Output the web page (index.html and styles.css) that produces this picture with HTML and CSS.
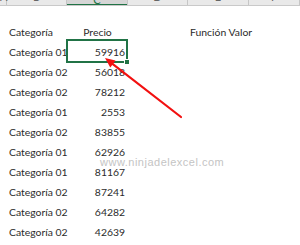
FILE: index.html
```html
<!DOCTYPE html>
<html lang="es">
<head>
<meta charset="utf-8">
<title>Función Valor</title>
<link rel="stylesheet" href="styles.css">
</head>
<body>
<div class="sheet">
  <div class="colheads">
    <div class="ch">A</div>
    <div class="ch">B</div>
    <div class="ch sel">C</div>
    <div class="ch">D</div>
    <div class="ch">E</div>
    <div class="ch">F</div>
  </div>
  <div class="grid">
    <div class="row head"><span></span><span class="name">Categoría</span><span class="price center">Precio</span><span></span><span class="name">Función Valor</span><span></span></div>
    <div class="row"><span></span><span class="name">Categoría 01</span><span class="price active">59916</span><span></span><span></span><span></span></div>
    <div class="row"><span></span><span class="name">Categoría 02</span><span class="price">56018</span><span></span><span></span><span></span></div>
    <div class="row"><span></span><span class="name">Categoría 02</span><span class="price">78212</span><span></span><span></span><span></span></div>
    <div class="row"><span></span><span class="name">Categoría 01</span><span class="price">2553</span><span></span><span></span><span></span></div>
    <div class="row"><span></span><span class="name">Categoría 02</span><span class="price">83855</span><span></span><span></span><span></span></div>
    <div class="row"><span></span><span class="name">Categoría 01</span><span class="price">62926</span><span></span><span></span><span></span></div>
    <div class="row"><span></span><span class="name">Categoría 01</span><span class="price">81167</span><span></span><span></span><span></span></div>
    <div class="row"><span></span><span class="name">Categoría 02</span><span class="price">87241</span><span></span><span></span><span></span></div>
    <div class="row"><span></span><span class="name">Categoría 02</span><span class="price">64282</span><span></span><span></span><span></span></div>
    <div class="row"><span></span><span class="name">Categoría 02</span><span class="price">42639</span><span></span><span></span><span></span></div>
  </div>
  <div class="watermark">www.ninjadelexcel.com</div>
  <svg class="arrow" width="300" height="245" viewBox="0 0 300 245">
    <line x1="181" y1="117" x2="112.5" y2="63.8" stroke="#f21010" stroke-width="2.2" stroke-linecap="round"/>
    <polygon points="105,58 115.5,60.5 110.3,67.5" fill="#f21010"/>
  </svg>
</div>
</body>
</html>
```
FILE: styles.css
```css
* { box-sizing: border-box; }
html, body { margin: 0; padding: 0; background: #ffffff; }
body {
  font-family: "Lato", "Liberation Sans", sans-serif;
  font-size: 10.4px;
  color: #2b2b2b;
}
.sheet {
  position: relative;
  width: 300px;
  height: 245px;
  overflow: hidden;
}
.colheads {
  display: grid;
  grid-template-columns: 7px 60px 61px 60px 61px 1fr;
  height: 6px;
  background: #e9e9e9;
  border-bottom: 1px solid #c9c9c9;
  overflow: hidden;
}
.ch {
  border-right: 1px solid #c6c6c6;
  text-align: center;
  font-size: 11px;
  line-height: 11px;
  margin-top: -9px;
  color: #666;
  height: 15px;
}
.ch.sel {
  background: #d6d6d6;
  color: #217346;
  box-shadow: inset 0 -2px 0 0 #217346;
  margin-top: 0;
  position: relative;
  height: 6px;
  line-height: 0;
}
.grid {
  display: flex;
  flex-direction: column;
  padding-top: 16px;
}
.row {
  display: grid;
  grid-template-columns: 7px 60px 61px 60px 61px 1fr;
  height: 20px;
  line-height: 20px;
}
.row span { white-space: nowrap; }
.name { padding-left: 2px; }
.price {
  text-align: right;
  padding-right: 3px;
}
.price.center { text-align: center; padding-right: 0; }
.active { position: relative; }
.active::after {
  content: "";
  position: absolute;
  left: -1px;
  top: -3px;
  right: 0;
  bottom: -1px;
  border: 2px solid #217346;
}
.active::before {
  content: "";
  position: absolute;
  right: -2px;
  bottom: -3px;
  width: 4px;
  height: 4px;
  background: #217346;
  border: 1px solid #ffffff;
  z-index: 2;
}
.watermark {
  position: absolute;
  left: 100px;
  top: 155px;
  font-family: "Liberation Sans", Arial, sans-serif;
  font-size: 11px;
  letter-spacing: 0.5px;
  color: #c4c4c4;
  line-height: 14px;
}
.arrow {
  position: absolute;
  left: 0;
  top: 0;
  pointer-events: none;
}
```
